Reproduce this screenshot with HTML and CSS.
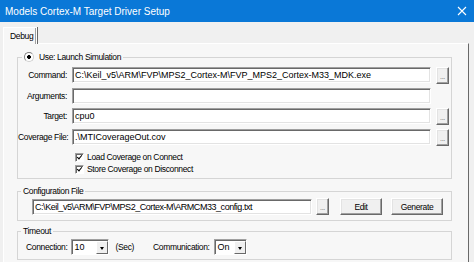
FILE: index.html
```html
<!DOCTYPE html>
<html lang="en">
<head>
    <meta charset="UTF-8">
    <title>Models Cortex-M Target Driver Setup</title>
    <link rel="stylesheet" href="styles.css">
</head>
<body>
    <div class="titlebar">
        <span class="title">Models Cortex-M Target Driver Setup</span>
        <svg class="close" width="10" height="10" viewBox="0 0 10 10">
            <path d="M1 1 L9 9 M9 1 L1 9" stroke="#fff" stroke-width="1.1" fill="none"/>
        </svg>
    </div>

    <div class="tabs">
        <div class="tab">Debug</div>
    </div>

    <div class="panel">
        <fieldset class="group sim">
            <legend><span class="radio"></span>Use: Launch Simulation</legend>
            <div class="form">
                <label>Command:</label>
                <div class="edit">C:\Keil_v5\ARM\FVP\MPS2_Cortex-M\FVP_MPS2_Cortex-M33_MDK.exe</div>
                <button class="btn dots">...</button>

                <label>Arguments:</label>
                <div class="edit"></div>
                <span></span>

                <label>Target:</label>
                <div class="edit">cpu0</div>
                <button class="btn dots">...</button>

                <label>Coverage File:</label>
                <div class="edit">.\MTICoverageOut.cov</div>
                <button class="btn dots">...</button>
            </div>
            <div class="checks">
                <div class="check"><span class="box"></span>Load Coverage on Connect</div>
                <div class="check"><span class="box"></span>Store Coverage on Disconnect</div>
            </div>
        </fieldset>

        <fieldset class="group config">
            <legend>Configuration File</legend>
            <div class="row">
                <div class="edit path">C:\Keil_v5\ARM\FVP\MPS2_Cortex-M\ARMCM33_config.txt</div>
                <button class="btn dots">...</button>
                <button class="btn edit-btn">Edit</button>
                <button class="btn gen-btn">Generate</button>
            </div>
        </fieldset>

        <fieldset class="group timeout">
            <legend>Timeout</legend>
            <div class="row">
                <span class="conn-label">Connection:</span>
                <div class="combo conn"><span class="value">10</span><span class="arrow"></span></div>
                <span class="unit">(Sec)</span>
                <span class="comm-label">Communication:</span>
                <div class="combo comm"><span class="value">On</span><span class="arrow"></span></div>
            </div>
        </fieldset>
    </div>
</body>
</html>
```

FILE: styles.css
```css
body {
    margin: 0;
    width: 474px;
    height: 262px;
    overflow: hidden;
    background: #f0f0f0;
    font-family: "Liberation Sans", Arial, sans-serif;
    font-size: 8.5px;
    letter-spacing: -0.35px;
    color: #000;
}
.titlebar {
    height: 22px;
    background: #0a78d7;
    display: flex;
    align-items: center;
    justify-content: space-between;
    padding: 0 7px 0 5px;
}
.title {
    color: #fff;
    font-size: 10px;
    letter-spacing: 0;
}
.tabs {
    height: 21px;
    padding-left: 3px;
    display: flex;
    align-items: flex-end;
}
.tab {
    height: 17px;
    width: 34px;
    box-sizing: border-box;
    background: #f7f7f7;
    border: 1px solid #fff;
    border-bottom: none;
    box-shadow: inset -1px 0 #a0a0a0, 1px 0 #696969;
    padding-left: 6px;
    line-height: 17px;
    position: relative;
    top: 1px;
}
.panel {
    margin-left: 3px;
    width: 466px;
    height: 240px;
    box-sizing: border-box;
    background: #f7f7f7;
    border: 1px solid;
    border-color: #fff #696969 #696969 #fff;
    padding: 7px 16px 0 13px;
}
.group {
    margin: 0;
    padding: 0;
    border: 1px solid #d5d5d5;
    min-width: 0;
}
.group legend {
    line-height: 12px;
    padding: 0 2px;
    margin-left: 3px;
    display: flex;
    align-items: center;
}
.sim legend {
    margin-left: 4px;
}
.radio {
    width: 8px;
    height: 8px;
    border-radius: 50%;
    border: 1px solid;
    border-color: #808080 #d0d0d0 #d0d0d0 #808080;
    background: radial-gradient(circle, #000 0 1.6px, #fff 2.2px);
    margin-right: 5px;
}
.form {
    display: grid;
    grid-template-columns: 49px 359px 13px;
    column-gap: 5px;
    row-gap: 4px;
    padding: 4px 2px 0 0;
}
.form label {
    text-align: right;
    line-height: 16px;
    white-space: nowrap;
}
.edit {
    height: 16px;
    box-sizing: border-box;
    background: #fff;
    border: 1px solid;
    border-color: #a0a0a0 #fff #fff #a0a0a0;
    box-shadow: inset 1px 1px #696969, inset -1px -1px #e3e3e3;
    padding: 0 2px;
    font-size: 9px;
    letter-spacing: 0;
    line-height: 14px;
    white-space: nowrap;
    overflow: hidden;
}
.btn {
    height: 17px;
    box-sizing: border-box;
    background: #f0f0f0;
    border: 1px solid;
    border-color: #fff #696969 #696969 #fff;
    box-shadow: inset -1px -1px #a0a0a0, inset 1px 1px #e3e3e3;
    font: inherit;
    letter-spacing: inherit;
    color: #000;
    padding: 0;
}
.dots {
    width: 13px;
    font-size: 7px;
    color: #666;
    line-height: 17px;
}
.checks {
    margin: 5px 0 3px 57px;
}
.check {
    height: 12px;
    display: flex;
    align-items: center;
}
.box {
    width: 9px;
    height: 9px;
    box-sizing: border-box;
    background: #fff;
    border: 1px solid;
    border-color: #a0a0a0 #fff #fff #a0a0a0;
    box-shadow: inset 1px 1px #696969;
    margin-right: 3px;
    position: relative;
}
.box::after {
    content: "";
    position: absolute;
    left: 2px;
    top: 0;
    width: 2px;
    height: 4px;
    border: solid #000;
    border-width: 0 1.5px 1.5px 0;
    transform: rotate(40deg);
}
.config {
    margin-top: 6px;
}
.row {
    display: flex;
    align-items: center;
}
.config .row {
    height: 17px;
    padding: 1px 0 5px 14px;
}
.path {
    width: 280px;
    letter-spacing: -0.45px;
}
.config .dots {
    margin-left: 4px;
}
.edit-btn {
    width: 42px;
    margin-left: 11px;
}
.gen-btn {
    width: 52px;
    margin-left: 9px;
}
.timeout {
    margin-top: 4px;
}
.timeout .row {
    height: 16px;
    padding: 2px 0 4px 8px;
}
.combo {
    height: 16px;
    box-sizing: border-box;
    background: #fff;
    border: 1px solid;
    border-color: #a0a0a0 #fff #fff #a0a0a0;
    box-shadow: inset 1px 1px #696969;
    display: flex;
    align-items: stretch;
    margin-left: 3px;
}
.combo .value {
    flex: 1;
    padding-left: 3px;
    font-size: 9px;
    letter-spacing: 0;
    line-height: 14px;
}
.combo .arrow {
    width: 12px;
    box-sizing: border-box;
    margin: 1px 0 0 0;
    background: #f0f0f0;
    border: 1px solid;
    border-color: #fff #696969 #696969 #fff;
    position: relative;
}
.combo .arrow::after {
    content: "";
    position: absolute;
    left: 3px;
    top: 5px;
    border: 2.5px solid transparent;
    border-top: 3px solid #000;
}
.conn {
    width: 38px;
}
.comm {
    width: 33px;
    margin-left: 4px;
}
.unit {
    margin-left: 7px;
}
.comm-label {
    margin-left: 19px;
}
```
